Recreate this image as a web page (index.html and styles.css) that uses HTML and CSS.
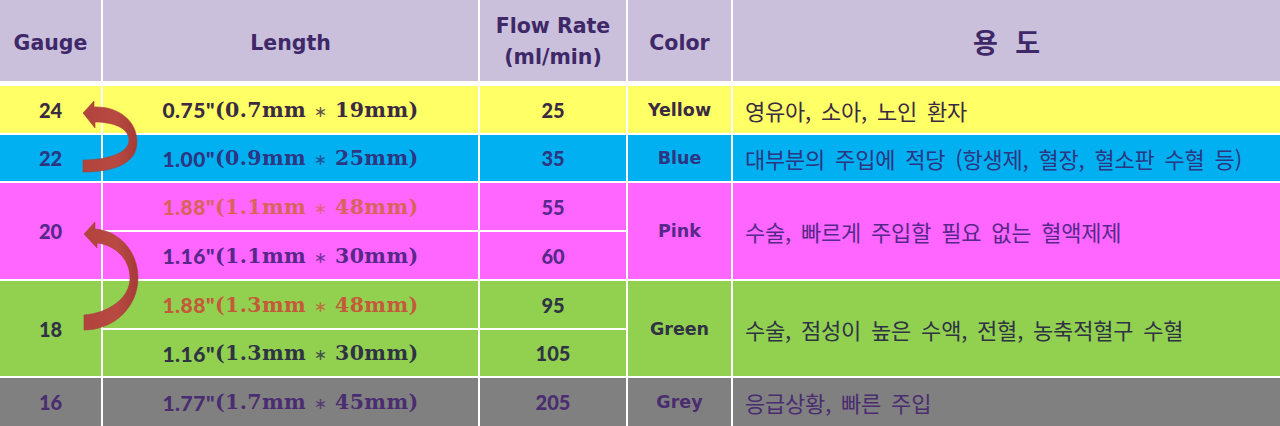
FILE: index.html
```html
<!DOCTYPE html>
<html lang="ko">
<head>
<meta charset="utf-8">
<title>IV Catheter Gauge</title>
<link rel="stylesheet" href="styles.css">
</head>
<body>
<div class="wrap">
  <div class="grid">
    <div class="cell head">Gauge</div>
    <div class="cell head">Length</div>
    <div class="cell head two">Flow Rate<br>(ml/min)</div>
    <div class="cell head">Color</div>
    <div class="cell head ko-head">용&nbsp;도</div>

    <div class="cell yellow num">24</div>
    <div class="cell yellow len"><span class="in">0.75"</span><span class="mm">(0.7mm <span class="ast">∗</span> 19mm)</span></div>
    <div class="cell yellow num">25</div>
    <div class="cell yellow word">Yellow</div>
    <div class="cell yellow ko">영유아, 소아, 노인 환자</div>

    <div class="cell blue num">22</div>
    <div class="cell blue len"><span class="in">1.00"</span><span class="mm">(0.9mm <span class="ast">∗</span> 25mm)</span></div>
    <div class="cell blue num">35</div>
    <div class="cell blue word">Blue</div>
    <div class="cell blue ko">대부분의 주입에 적당 (항생제, 혈장, 혈소판 수혈 등)</div>

    <div class="cell pink num span2">20</div>
    <div class="cell pink len alt"><span class="in">1.88"</span><span class="mm">(1.1mm <span class="ast">∗</span> 48mm)</span></div>
    <div class="cell pink num">55</div>
    <div class="cell pink word span2">Pink</div>
    <div class="cell pink ko span2">수술, 빠르게 주입할 필요 없는 혈액제제</div>
    <div class="cell pink len"><span class="in">1.16"</span><span class="mm">(1.1mm <span class="ast">∗</span> 30mm)</span></div>
    <div class="cell pink num">60</div>

    <div class="cell green num span2">18</div>
    <div class="cell green len alt"><span class="in">1.88"</span><span class="mm">(1.3mm <span class="ast">∗</span> 48mm)</span></div>
    <div class="cell green num">95</div>
    <div class="cell green word span2">Green</div>
    <div class="cell green ko span2">수술, 점성이 높은 수액, 전혈, 농축적혈구 수혈</div>
    <div class="cell green len"><span class="in">1.16"</span><span class="mm">(1.3mm <span class="ast">∗</span> 30mm)</span></div>
    <div class="cell green num">105</div>

    <div class="cell grey num">16</div>
    <div class="cell grey len"><span class="in">1.77"</span><span class="mm">(1.7mm <span class="ast">∗</span> 45mm)</span></div>
    <div class="cell grey num">205</div>
    <div class="cell grey word">Grey</div>
    <div class="cell grey ko">응급상황, 빠른 주입</div>
  </div>

  <svg class="arrows" width="1280" height="426" viewBox="0 0 1280 426" aria-hidden="true">
    <defs>
      <linearGradient id="ag" x1="0" y1="0" x2="1" y2="0">
        <stop offset="0" stop-color="#b0433c"/>
        <stop offset="0.6" stop-color="#b84a42"/>
        <stop offset="1" stop-color="#a53b36"/>
      </linearGradient>
    </defs>
    <path class="arrow" d="M83,113 L94,101 L94,107 C116,106 137,119 137,142 C137,163 115,172 83,172 L83,160 C108,160 129,153 129,140 C129,128 113,122 95,122 L95,128 Z"/>
    <path class="arrow" d="M84,234 L95,222 L95,229 C120,231 138,252 138,278 C138,306 115,330 84,330 L84,315 C109,313 130,298 130,278 C130,259 115,245 97,243 L97,248 Z"/>
  </svg>
</div>
</body>
</html>
```

FILE: styles.css
```css
html, body {
  margin: 0;
  padding: 0;
  background: #ffffff;
}

.wrap {
  position: relative;
  width: 1280px;
  height: 426px;
  overflow: hidden;
}

.grid {
  display: grid;
  grid-template-columns: 101px 375px 146px 103px 547px;
  grid-template-rows: 84px 47px 46px 47px 47px 47px 46px 48px;
  column-gap: 2px;
  row-gap: 2px;
  background: #ffffff;
  width: 1280px;
  height: 426px;
}

.cell {
  display: flex;
  align-items: center;
  justify-content: center;
  color: #3d2a5c;
  font-family: "DejaVu Sans", "Noto Sans", sans-serif;
  font-weight: bold;
  font-size: 18px;
  white-space: nowrap;
}

.head {
  background: #cac0dc;
  margin-bottom: 3px;
  padding-top: 6px;
  color: #3f2868;
  font-size: 20.5px;
  text-align: center;
  line-height: 31px;
}

.head.two {
  padding-top: 3px;
}

.ko-head {
  font-family: "Noto Sans CJK KR", sans-serif;
  font-size: 27px;
  letter-spacing: 5px;
  padding-left: 5px;
  padding-top: 2px;
}

.span2 {
  grid-row: span 2;
}

.num {
  font-family: "Lato", "Noto Sans", sans-serif;
  font-weight: 900;
  font-size: 20px;
}

.word {
  font-size: 17.5px;
}

.len .in {
  font-family: "Lato", sans-serif;
  font-weight: 900;
  font-size: 21px;
  letter-spacing: 0.5px;
}

.len .mm {
  font-family: "DejaVu Serif", "Liberation Serif", serif;
  font-weight: bold;
  font-size: 20.5px;
  letter-spacing: 0.4px;
}

.len .ast {
  font-family: "DejaVu Sans", sans-serif;
  font-weight: normal;
  font-size: 16px;
  opacity: 0.8;
}

.ko {
  justify-content: flex-start;
  padding-left: 12px;
  font-family: "Noto Sans CJK KR", sans-serif;
  font-weight: 400;
  font-size: 22px;
  letter-spacing: -0.2px;
  word-spacing: 4px;
}

.yellow { background: #ffff66; color: #3a2b42; }
.blue   { background: #00b0f0; color: #2c3682; }
.pink   { background: #ff66ff; color: #57288a; }
.green  { background: #92d050; color: #2f3344; }
.grey   { background: #808080; color: #4a2d70; }

.pink.alt  { color: #d8635c; }
.green.alt { color: #c45a3a; }

.arrows {
  position: absolute;
  left: 0;
  top: 0;
  pointer-events: none;
}

.arrow {
  fill: url(#ag);
  stroke: #a84039;
  stroke-width: 0.6;
}
```
